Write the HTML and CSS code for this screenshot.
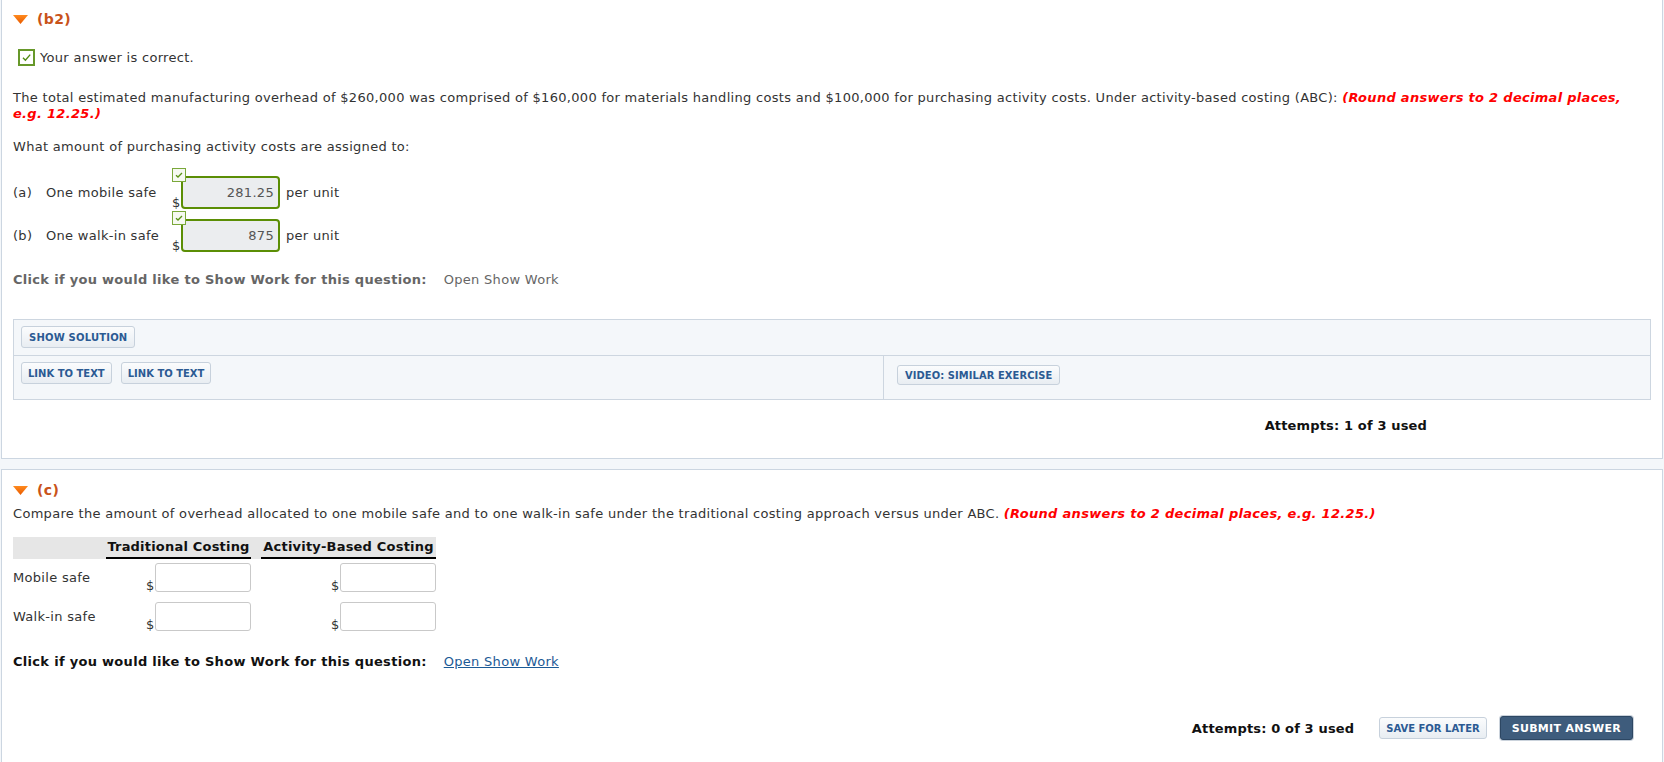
FILE: index.html
```html
<!DOCTYPE html>
<html lang="en">
<head>
<meta charset="utf-8">
<title>Question</title>
<link rel="stylesheet" href="styles.css">
</head>
<body>
<section class="part part-top">
  <h2 class="part-title">
    <svg class="caret" width="15" height="9" viewBox="0 0 15 9"><defs><linearGradient id="cg1" x1="0" y1="0" x2="0" y2="1"><stop offset="0" stop-color="#ff8a1e"/><stop offset="1" stop-color="#e85a00"/></linearGradient></defs><polygon points="0,0 15,0 7.5,9" fill="url(#cg1)"/></svg>
    <span>(b2)</span>
  </h2>
  <div class="status">
    <span class="status-box"><svg width="13" height="13" viewBox="0 0 13 13"><path d="M3 6.8 L5.4 9.2 L10.2 3.6" fill="none" stroke="#4f8a10" stroke-width="1.4"/></svg></span>
    <span>Your answer is correct.</span>
  </div>
  <p class="prompt">The total estimated manufacturing overhead of $260,000 was comprised of $160,000 for materials handling costs and $100,000 for purchasing activity costs. Under activity-based costing (ABC): <em class="hint">(Round answers to 2 decimal places,<br>e.g. 12.25.)</em></p>
  <p class="question">What amount of purchasing activity costs are assigned to:</p>
  <div class="answer-row">
    <span class="ans-letter">(a)</span>
    <span class="ans-label">One mobile safe</span>
    <span class="field">
      <span class="cur">$</span>
      <span class="done-input">281.25</span>
      <span class="mini-check"><svg width="10" height="10" viewBox="0 0 10 10"><path d="M2 5.2 L4 7 L8 3" fill="none" stroke="#5a9216" stroke-width="1.3"/></svg></span>
    </span>
    <span class="unit">per unit</span>
  </div>
  <div class="answer-row">
    <span class="ans-letter">(b)</span>
    <span class="ans-label">One walk-in safe</span>
    <span class="field">
      <span class="cur">$</span>
      <span class="done-input">875</span>
      <span class="mini-check"><svg width="10" height="10" viewBox="0 0 10 10"><path d="M2 5.2 L4 7 L8 3" fill="none" stroke="#5a9216" stroke-width="1.3"/></svg></span>
    </span>
    <span class="unit">per unit</span>
  </div>
  <div class="showwork muted">
    <span class="sw-label">Click if you would like to Show Work for this question:</span>
    <span class="sw-link">Open Show Work</span>
  </div>
  <div class="resources">
    <div class="res-row">
      <button class="btn">SHOW SOLUTION</button>
    </div>
    <div class="res-row res-split">
      <div class="res-cell">
        <button class="btn btn-link">LINK TO TEXT</button>
        <button class="btn btn-link">LINK TO TEXT</button>
      </div>
      <div class="res-cell res-cell-right">
        <button class="btn btn-video">VIDEO: SIMILAR EXERCISE</button>
      </div>
    </div>
  </div>
  <div class="attempts attempts-top">Attempts: 1 of 3 used</div>
</section>

<section class="part part-bottom">
  <h2 class="part-title">
    <svg class="caret" width="15" height="9" viewBox="0 0 15 9"><defs><linearGradient id="cg2" x1="0" y1="0" x2="0" y2="1"><stop offset="0" stop-color="#ff8a1e"/><stop offset="1" stop-color="#e85a00"/></linearGradient></defs><polygon points="0,0 15,0 7.5,9" fill="url(#cg2)"/></svg>
    <span>(c)</span>
  </h2>
  <p class="compare">Compare the amount of overhead allocated to one mobile safe and to one walk-in safe under the traditional costing approach versus under ABC. <em class="hint">(Round answers to 2 decimal places, e.g. 12.25.)</em></p>
  <div class="grid">
    <div class="grid-row grid-head">
      <span></span>
      <span class="col-head">Traditional Costing</span>
      <span class="col-head">Activity-Based Costing</span>
    </div>
    <div class="grid-row">
      <span class="row-label">Mobile safe</span>
      <span class="cell"><span class="cur">$</span><input class="txt" type="text"></span>
      <span class="cell"><span class="cur">$</span><input class="txt" type="text"></span>
    </div>
    <div class="grid-row">
      <span class="row-label">Walk-in safe</span>
      <span class="cell"><span class="cur">$</span><input class="txt" type="text"></span>
      <span class="cell"><span class="cur">$</span><input class="txt" type="text"></span>
    </div>
  </div>
  <div class="showwork showwork-c">
    <span class="sw-label">Click if you would like to Show Work for this question:</span>
    <a class="sw-link" href="#">Open Show Work</a>
  </div>
  <div class="submit-bar">
    <span class="attempts">Attempts: 0 of 3 used</span>
    <button class="btn btn-save">SAVE FOR LATER</button>
    <button class="btn-submit">SUBMIT ANSWER</button>
  </div>
</section>
</body>
</html>
```

FILE: styles.css
```css
* { box-sizing: border-box; }
html, body { margin: 0; padding: 0; }
body {
  background: #f4f7fa;
  font-family: "DejaVu Sans", sans-serif;
  font-size: 13px;
  letter-spacing: 0.3px;
  color: #333;
  padding: 0 1px;
  height: 762px;
  overflow: hidden;
}
.part {
  background: #fff;
  border: 1px solid #ccd6e1;
  padding: 0 11px;
}
.part-top {
  border-top: 0;
  padding-top: 9px;
  padding-bottom: 24px;
}
.part-bottom {
  margin-top: 10px;
  padding-top: 10px;
  padding-bottom: 40px;
}
.part-title {
  margin: 0;
  height: 20px;
  display: flex;
  align-items: center;
  gap: 9px;
  font-size: 14px;
  font-weight: bold;
  letter-spacing: 0.4px;
  color: #c9531a;
  line-height: 20px;
}
.caret { display: block; margin-top: 1px; }
.status {
  margin-top: 20px;
  display: flex;
  align-items: center;
  gap: 5px;
  height: 17px;
  padding-left: 5px;
}
.status-box {
  width: 17px;
  height: 17px;
  border: 2px solid #67982a;
  background: #fff;
  display: flex;
  align-items: center;
  justify-content: center;
}
.prompt {
  margin: 24px 0 0;
  line-height: 16px;
}
.hint {
  color: #f00;
  font-weight: bold;
  font-style: italic;
}
.question {
  margin: 17px 0 0;
  line-height: 16px;
}
.answer-row {
  display: flex;
  align-items: center;
  padding-top: 8px;
  height: 42px;
  margin-top: 1px;
}
.question + .answer-row { margin-top: 12px; }
.ans-letter { width: 33px; }
.ans-label { width: 126px; }
.field {
  position: relative;
  display: flex;
  align-items: flex-end;
  height: 33px;
}
.cur {
  line-height: 13px;
  width: 9px;
  letter-spacing: 0;
}
.done-input {
  width: 99px;
  height: 33px;
  border: 2px solid #5b8e05;
  border-radius: 4px;
  background: #ebedef;
  color: #555;
  text-align: right;
  padding: 0 4px;
  line-height: 29px;
}
.mini-check {
  position: absolute;
  left: 0;
  top: -8px;
  width: 14px;
  height: 14px;
  border: 1px solid #7aa83a;
  background: #f6f9f1;
  display: flex;
  align-items: center;
  justify-content: center;
}
.unit { margin-left: 6px; }
.showwork {
  margin-top: 20px;
  line-height: 16px;
  display: flex;
  gap: 17px;
}
.showwork-c { margin-top: 23px; }
.sw-label { font-weight: bold; color: #111; }
.sw-link { color: #1b5a96; }
.muted .sw-label { color: #666; }
.muted .sw-link { color: #666; }
.resources {
  margin-top: 31px;
  background: #f4f7fa;
  border: 1px solid #cdd6e0;
}
.res-row {
  padding: 6px 7px;
  min-height: 35px;
}
.res-split {
  border-top: 1px solid #cdd6e0;
  display: grid;
  grid-template-columns: 869px 1fr;
  padding: 0;
  height: 44px;
}
.res-cell {
  padding: 6px 7px;
  display: flex;
  gap: 9px;
  align-items: flex-start;
}
.res-cell-right {
  border-left: 1px solid #cdd6e0;
  padding: 9px 13px;
}
.btn {
  font-family: "DejaVu Sans", sans-serif;
  font-size: 10px;
  font-weight: bold;
  letter-spacing: 0.2px;
  color: #2b5a93;
  height: 22px;
  padding: 0 7px;
  border: 1px solid #c7d1dc;
  border-radius: 3px;
  background: linear-gradient(#fbfcfd, #e8edf2);
  cursor: pointer;
}
.btn-link { letter-spacing: 0; padding: 0 6px; }
.btn-video {
  height: 20px;
  font-stretch: condensed;
  font-size: 11px;
  letter-spacing: 0.1px;
}
.attempts {
  font-weight: bold;
  color: #111;
  line-height: 17px;
  letter-spacing: 0.15px;
}
.attempts-top {
  margin-top: 17px;
  text-align: right;
  padding-right: 224px;
}
.compare {
  margin: 6px 0 0;
  line-height: 16px;
}
.grid { margin-top: 15px; }
.grid-row {
  display: grid;
  grid-template-columns: 83px 145px 175px;
  column-gap: 10px;
  width: 423px;
  align-items: center;
}
.grid-head {
  background: #e6e6e6;
  height: 22px;
  align-items: stretch;
}
.col-head {
  font-weight: bold;
  color: #111;
  border-bottom: 2px solid #000;
  text-align: center;
  line-height: 20px;
  white-space: nowrap;
  letter-spacing: 0.2px;
}
.grid-row + .grid-row { margin-top: 10px; }
.grid-head + .grid-row { margin-top: 4px; }
.row-label { color: #333; }
.cell {
  display: flex;
  justify-content: flex-end;
  align-items: flex-end;
}
.txt {
  width: 96px;
  height: 29px;
  border: 1px solid #c9c9c9;
  border-radius: 3px;
  background: #fff;
  margin: 0;
}
.submit-bar {
  margin-top: 46px;
  display: flex;
  justify-content: flex-end;
  align-items: center;
  padding-right: 18px;
}
.submit-bar .attempts { margin-right: 25px; }
.btn-save { height: 22px; letter-spacing: 0; padding: 0 6px; }
.btn-submit {
  margin-left: 13px;
  font-family: "DejaVu Sans", sans-serif;
  font-size: 11px;
  font-weight: bold;
  letter-spacing: 0.3px;
  color: #fff;
  height: 24px;
  padding: 0 11px;
  background: #3e5c7c;
  border: 1px solid #2d4763;
  border-radius: 3px;
  box-shadow: 0 0 0 1px #cbd3dc;
  cursor: pointer;
}
```
